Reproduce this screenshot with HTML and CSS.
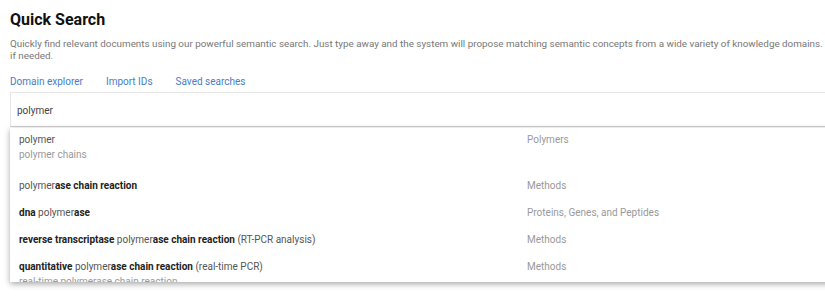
FILE: index.html
```html
<!DOCTYPE html>
<html>
<head>
<meta charset="utf-8">
<link rel="stylesheet" href="styles.css">
</head>
<body>
<div class="page">
  <h1 class="title">Quick Search</h1>
  <p class="desc">Quickly find relevant documents using our powerful semantic search. Just type away and the system will propose matching semantic concepts from a wide variety of knowledge domains. if needed.</p>
  <nav class="links">
    <a class="link">Domain explorer</a>
    <a class="link">Import IDs</a>
    <a class="link">Saved searches</a>
  </nav>
  <div class="search">
    <div class="input">polymer</div>
    <div class="dropdown">
      <div class="row first">
        <div class="term"><span>polymer</span><span class="alt">polymer chains</span></div>
        <div class="domain">Polymers</div>
      </div>
      <div class="row">
        <div class="term"><span>polymer<b>ase chain reaction</b></span></div>
        <div class="domain">Methods</div>
      </div>
      <div class="row">
        <div class="term"><span><b>dna</b> polymer<b>ase</b></span></div>
        <div class="domain">Proteins, Genes, and Peptides</div>
      </div>
      <div class="row">
        <div class="term"><span><b>reverse transcriptase</b> polymer<b>ase chain reaction</b> (RT-PCR analysis)</span></div>
        <div class="domain">Methods</div>
      </div>
      <div class="row">
        <div class="term"><span><b>quantitative</b> polymer<b>ase chain reaction</b> (real-time PCR)</span><span class="alt">real-time polymerase chain reaction</span></div>
        <div class="domain">Methods</div>
      </div>
    </div>
  </div>
</div>
</body>
</html>
```

FILE: styles.css
```css
html, body {
  margin: 0;
  padding: 0;
  background: #fff;
  overflow: hidden;
}
body {
  font-family: Roboto, "Liberation Sans", sans-serif;
  width: 825px;
  height: 300px;
}
.page {
  padding: 9px 0 0 10px;
  width: 815px;
}
.title {
  margin: 0;
  font-size: 16px;
  line-height: 22px;
  font-weight: 700;
  color: #111;
}
.desc {
  margin: 7px 0 0;
  width: 815px;
  font-size: 9.85px;
  line-height: 12px;
  color: #777;
}
.links {
  display: flex;
  gap: 23px;
  margin-top: 14px;
}
.link {
  font-size: 10px;
  line-height: 12px;
  color: #4a7cc4;
}
.search {
  position: relative;
  margin-top: 4px;
  width: 1030px;
}
.input {
  height: 35px;
  box-sizing: border-box;
  border: 1px solid #e6e6e6;
  border-bottom-color: #cfcfcf;
  padding: 12px 0 0 6px;
  font-size: 10px;
  line-height: 12px;
  color: #444;
}
.dropdown {
  position: absolute;
  left: 0;
  right: 0;
  top: 36px;
  height: 154px;
  overflow: hidden;
  background: #fff;
  box-shadow: 0 2px 6px rgba(0,0,0,0.35);
  padding: 0 9px;
}
.row {
  display: grid;
  grid-template-columns: 508px 1fr;
  padding: 7px 0;
  font-size: 10px;
  line-height: 13px;
  color: #555;
}
.row.first {
  padding: 5px 0 11px;
}
.term {
  display: flex;
  flex-direction: column;
}
.term b {
  font-weight: 700;
  color: #222;
}
.alt {
  margin-top: 2px;
  color: #999;
}
.domain {
  color: #999;
}
```
